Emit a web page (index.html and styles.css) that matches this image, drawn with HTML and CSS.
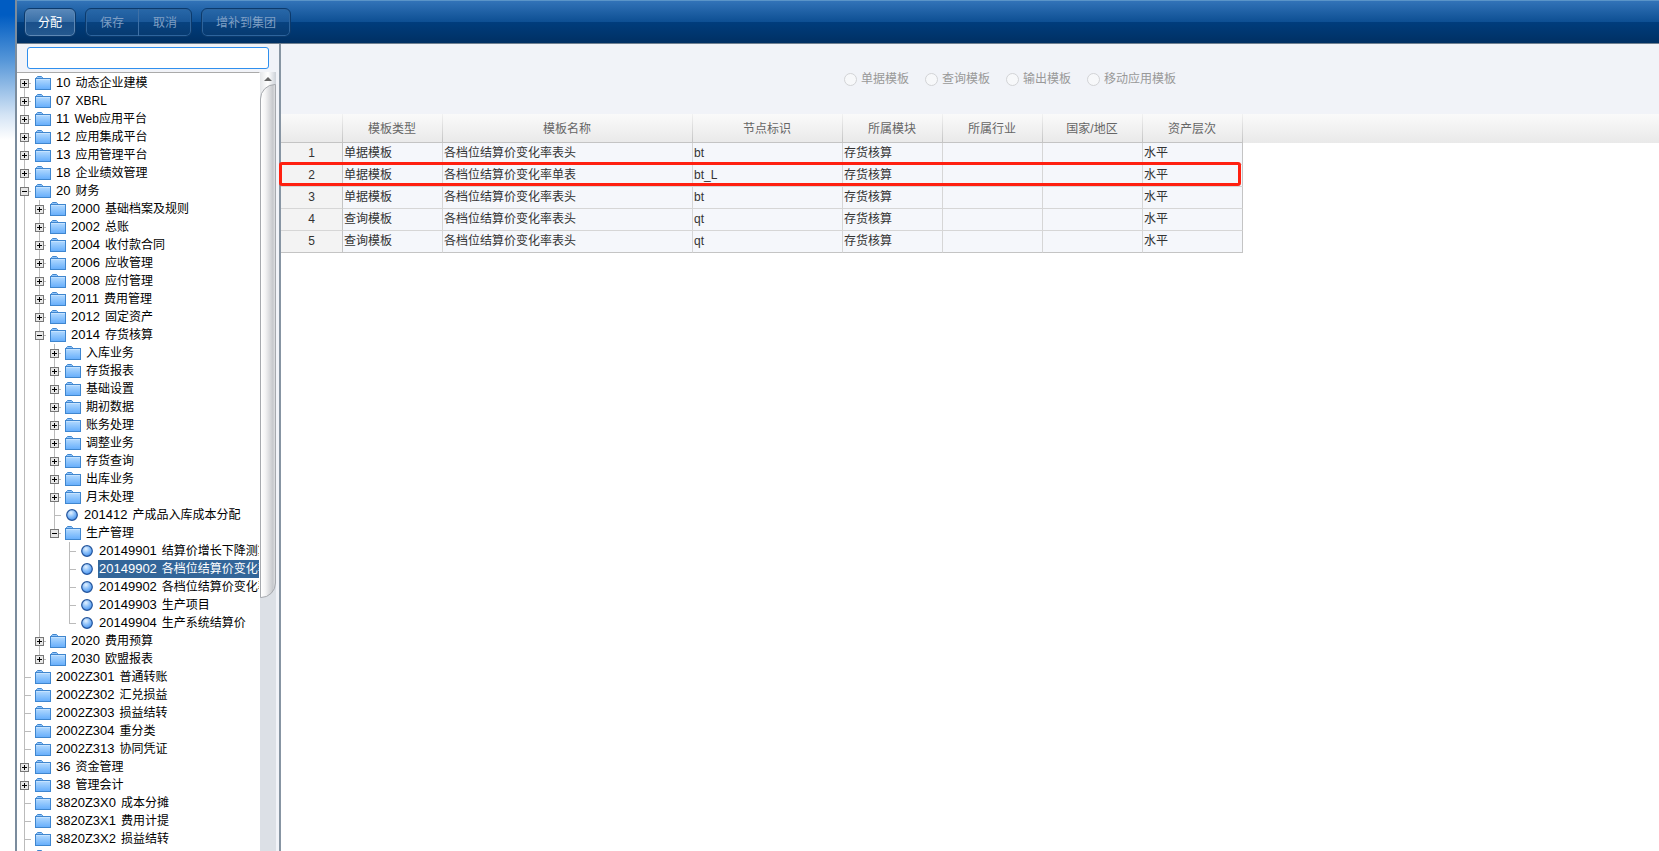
FILE: index.html
```html
<!DOCTYPE html>
<html lang="zh-CN">
<head>
<meta charset="utf-8">
<title>模板分配</title>
<link rel="stylesheet" href="styles.css">
</head>
<body>
<svg class="defs" aria-hidden="true">
  <linearGradient id="folder-fill" x1="0" y1="0" x2="0" y2="1"><stop offset="0" stop-color="#b5dbff"/><stop offset="1" stop-color="#64adfb"/></linearGradient>
  <radialGradient id="ball-fill" cx=".4" cy=".3" r=".7"><stop offset="0" stop-color="#e4f2ff"/><stop offset=".5" stop-color="#8fc2fa"/><stop offset="1" stop-color="#4a94ee"/></radialGradient>
  <symbol id="folder" viewBox="0 0 16 14"><path d="M1.5 2.5V1.5L2.5 .5H6.5L7.5 1.5V2.5" fill="#8fc4fb" stroke="#3f86cf"/><rect x=".5" y="2.5" width="15" height="11" fill="url(#folder-fill)" stroke="#3f86cf"/><path d="M1 3.5H15" stroke="#c5e3ff"/></symbol>
  <symbol id="ball" viewBox="0 0 12 12"><circle cx="6" cy="6" r="5.3" fill="url(#ball-fill)" stroke="#23549c" stroke-width="1.2"/></symbol>
</svg>
<div class="app">
  <div class="edge"></div>
  <div class="window">
    <header class="toolbar">
      <div class="group active"><button type="button">分配</button></div>
      <div class="group"><button type="button" disabled>保存</button><button type="button" disabled>取消</button></div>
      <div class="group"><button type="button" disabled>增补到集团</button></div>
    </header>
    <div class="body">
      <aside class="sidebar">
        <div class="search"><input type="text" aria-label="搜索"></div>
        <div class="tree-pane">
          <nav class="tree-view" aria-label="功能树"><ul class="tree" id="tree"></ul></nav>
          <div class="scrollbar" aria-hidden="true"><svg class="arrow" viewBox="0 0 8 4"><path d="M0 4L4 0L8 4Z" fill="#666"/></svg><div class="thumb"></div></div>
        </div>
      </aside>
      <main class="content">
        <form class="options">
          <label><input type="radio" name="kind" disabled>单据模板</label>
          <label><input type="radio" name="kind" disabled>查询模板</label>
          <label><input type="radio" name="kind" disabled>输出模板</label>
          <label><input type="radio" name="kind" disabled>移动应用模板</label>
        </form>
        <div class="grid">
          <table>
            <colgroup><col class="c-num"><col class="c-std"><col class="c-name"><col class="c-node"><col class="c-std"><col class="c-std"><col class="c-std"><col class="c-std"></colgroup>
            <thead><tr><th></th><th>模板类型</th><th>模板名称</th><th>节点标识</th><th>所属模块</th><th>所属行业</th><th>国家/地区</th><th>资产层次</th></tr></thead>
            <tbody>
              <tr><th>1</th><td>单据模板</td><td>各档位结算价变化率表头</td><td>bt</td><td>存货核算</td><td></td><td></td><td>水平</td></tr>
              <tr class="marked"><th>2</th><td>单据模板</td><td>各档位结算价变化率单表</td><td>bt_L</td><td>存货核算</td><td></td><td></td><td>水平</td></tr>
              <tr><th>3</th><td>单据模板</td><td>各档位结算价变化率表头</td><td>bt</td><td>存货核算</td><td></td><td></td><td>水平</td></tr>
              <tr><th>4</th><td>查询模板</td><td>各档位结算价变化率表头</td><td>qt</td><td>存货核算</td><td></td><td></td><td>水平</td></tr>
              <tr><th>5</th><td>查询模板</td><td>各档位结算价变化率表头</td><td>qt</td><td>存货核算</td><td></td><td></td><td>水平</td></tr>
            </tbody>
          </table>
        </div>
      </main>
    </div>
  </div>
</div>
<script src="tree.js"></script>
</body>
</html>
```
FILE: styles.css
```css
* { box-sizing: border-box; }
body { margin: 0; font: 12px/18px "Liberation Sans", "Noto Sans CJK SC", sans-serif; color: #000; background: #fff; }
button, input { font: inherit; }
.defs { position: absolute; width: 0; height: 0; }
.app { display: flex; height: 100vh; overflow: hidden; }
.edge { flex: none; width: 15px; background: linear-gradient(#005cc2, #005cc2 15px, #5596d8 60px, #d4e4f5 115px, #fff 140px); }
.window { flex: 1; min-width: 0; display: flex; flex-direction: column; border-left: 2px solid #7b8c9d; }

.toolbar { flex: none; height: 44px; display: flex; align-items: center; gap: 9px; padding: 1px 7px 0; border-top: 1px solid #5a94c8; border-bottom: 1px solid #6f8091; background: linear-gradient(#3273b8, #0d4f93 50%, #003d7d 50%, #003063); }
.group { display: flex; height: 29px; border: 1px solid #0c3a6c; border-radius: 6px; overflow: hidden; background: linear-gradient(#2868a9, #1a5798 50%, #08427f 50%, #073a70); box-shadow: inset 0 0 0 1px #2d649d; }
.group button { border: 0; padding: 1px 14px 0; background: none; color: #7f9fc4; }
.group button + button { border-left: 1px solid #3e70a6; }
.group.active { background: linear-gradient(#5a89bb, #376da5 50%, #1a508b 50%, #25598f); box-shadow: inset 0 0 0 1px #5d88b5; }
.group.active button { padding: 1px 13px 0; color: #fff; }

.body { flex: 1; min-height: 0; display: flex; }
.sidebar { flex: none; width: 264px; display: flex; flex-direction: column; background: #f1f3f8; border-right: 2px solid #8795a3; }
.search { padding: 3px 10px; }
.search input { display: block; width: 242px; height: 22px; padding: 0 4px; border: 1px solid #2f8fee; border-radius: 3px; background: #fff; outline: 0; }
.tree-pane { flex: 1; min-height: 0; display: flex; }
.tree-view { flex: none; width: 243px; overflow: hidden; background: #fff; border-top: 1px solid #aaa; border-right: 1px solid #fff; padding: 1px 0 0 3px; }
.scrollbar { flex: 1; margin-right: 3px; padding-top: 5px; display: flex; flex-direction: column; align-items: center; gap: 3px; background: linear-gradient(90deg, #e4e6e9, #fff 50%, #ccd1d8) top / 100% 24px no-repeat, #dce0e6; }
.arrow { width: 8px; height: 4px; }
.thumb { width: 100%; height: 514px; border: 1px solid #a6a9ae; border-radius: 15px 0 15px 0; background: linear-gradient(90deg, #fff, #f4f4f5 30%, #c6c8cc 85%, #dedfe2); }

.tree, .tree ul { list-style: none; margin: 0; padding: 0; }
.tree ul { padding-left: 15px; }
.tree li { position: relative; }
.tree li::before { content: ""; position: absolute; left: 4px; top: 0; bottom: 0; width: 1px; background: #bbb; }
.tree li:last-child::before { bottom: auto; height: 9px; }
.tree > li:first-child::before { top: 9px; }
.row { position: relative; display: flex; align-items: center; height: 18px; white-space: nowrap; }
.row::before { content: ""; position: absolute; left: 4px; top: 9px; width: 7px; height: 1px; background: #bbb; }
.toggle { position: relative; flex: none; width: 9px; height: 9px; padding: 0; margin-right: 6px; border: 1px solid #777; background: #e8e8e8; }
.toggle::before { content: ""; position: absolute; left: 1px; top: 3px; width: 5px; height: 1px; background: #000; }
.toggle.plus::after { content: ""; position: absolute; left: 3px; top: 1px; width: 1px; height: 5px; background: #000; }
.spacer { flex: none; width: 15px; }
.icon { flex: none; width: 16px; height: 14px; }
.icon.ball { width: 12px; height: 12px; margin: 0 3px 0 1px; }
.label { display: flex; gap: 5px; padding: 0 4px 0 5px; color: #000; text-decoration: none; }
.code { font-size: 13px; }
.icon.ball + .label { padding-left: 1px; margin-left: 2px; }
.label.selected { background: #336699; color: #fff; }

.content { flex: 1; min-width: 0; background: #fff; display: flex; flex-direction: column; }
.options { height: 70px; display: flex; justify-content: center; align-items: center; gap: 16px; padding-left: 80px; background: #f1f3f8; color: #999; }
.options label { display: flex; align-items: center; gap: 4px; }
.options input { appearance: none; width: 13px; height: 13px; margin: 0; border: 1px solid #d2d3d6; border-radius: 50%; background: #f7f8fa; }
.grid { background: linear-gradient(#fafafa, #e9e9e9) top / 100% 29px no-repeat; }
table { table-layout: fixed; width: 962px; border-collapse: separate; border-spacing: 0; color: #333; }
.c-num { width: 62px; }
.c-std { width: 100px; }
.c-name { width: 250px; }
.c-node { width: 150px; }
th, td { padding: 0 1px 2px; height: 22px; line-height: 18px; border-right: 1px solid #d6d6d6; border-bottom: 1px solid #d6d6d6; font-weight: 400; text-align: left; }
td { background: #f5f7fb; }
th { text-align: center; }
thead th { padding: 2px 2px 0 0; height: 29px; border-bottom-color: #c4c4c4; border-right: 0; color: #666; background: linear-gradient(#f2f2f2, #c4c4c4) right / 1px 100% no-repeat; }
tbody th { background: #f3f3f3; border-right-color: #c4c4c4; }
th:last-child, td:last-child { border-right-color: #c4c4c4; }
tbody tr:last-child > * { border-bottom-color: #c4c4c4; }
.marked { position: relative; }
.marked::after { content: ""; position: absolute; inset: -3px 2px 1px -2px; border: 3px solid #ff2010; border-radius: 3px; }
```
FILE: tree.js
```js
// Node: [code, name, kind, children]; kind: "+" closed, "-" open, "" no toggle, "o" leaf
const nodes = [
  ["10", "动态企业建模", "+"], ["07", "XBRL", "+"], ["11", "Web应用平台", "+"],
  ["12", "应用集成平台", "+"], ["13", "应用管理平台", "+"], ["18", "企业绩效管理", "+"],
  ["20", "财务", "-", [
    ["2000", "基础档案及规则", "+"], ["2002", "总账", "+"], ["2004", "收付款合同", "+"],
    ["2006", "应收管理", "+"], ["2008", "应付管理", "+"], ["2011", "费用管理", "+"],
    ["2012", "固定资产", "+"],
    ["2014", "存货核算", "-", [
      ["", "入库业务", "+"], ["", "存货报表", "+"], ["", "基础设置", "+"],
      ["", "期初数据", "+"], ["", "账务处理", "+"], ["", "调整业务", "+"],
      ["", "存货查询", "+"], ["", "出库业务", "+"], ["", "月末处理", "+"],
      ["201412", "产成品入库成本分配", "o"],
      ["", "生产管理", "-", [
        ["20149901", "结算价增长下降测算", "o"], ["20149902", "各档位结算价变化率", "o", null, true],
        ["20149902", "各档位结算价变化率", "o"], ["20149903", "生产项目", "o"],
        ["20149904", "生产系统结算价", "o"]
      ]]
    ]],
    ["2020", "费用预算", "+"], ["2030", "欧盟报表", "+"]
  ]],
  ["2002Z301", "普通转账", ""], ["2002Z302", "汇兑损益", ""], ["2002Z303", "损益结转", ""],
  ["2002Z304", "重分类", ""], ["2002Z313", "协同凭证", ""],
  ["36", "资金管理", "+"], ["38", "管理会计", "+"],
  ["3820Z3X0", "成本分摊", ""], ["3820Z3X1", "费用计提", ""], ["3820Z3X2", "损益结转", ""],
  ["", "", ""]
];

function render([code, name, kind, children, selected]) {
  const toggle = kind === "+" || kind === "-"
    ? `<button type="button" class="toggle ${kind === "+" ? "plus" : ""}" aria-label="${name}"></button>`
    : `<span class="spacer"></span>`;
  const icon = kind === "o" ? "ball" : "folder";
  return `<li><div class="row">${toggle}<svg class="icon ${icon}"><use href="#${icon}"/></svg>` +
    `<a href="#" class="label${selected ? " selected" : ""}">${code ? `<span class="code">${code}</span>` : ""}<span>${name}</span></a></div>` +
    (children ? `<ul>${children.map(render).join("")}</ul>` : "") + `</li>`;
}

document.getElementById("tree").innerHTML = nodes.map(render).join("");
```
